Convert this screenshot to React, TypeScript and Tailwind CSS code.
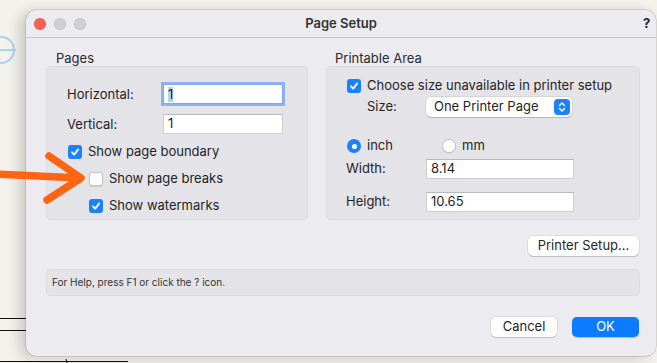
import React from 'react';

const ui = "font-['Inter','Helvetica',sans-serif]";

// macOS style check box
const CheckBox: React.FC<{ checked: boolean }> = ({ checked }) =>
  checked ? (
    <span className="flex h-[14px] w-[14px] shrink-0 items-center justify-center rounded-[3px] bg-[#1a82fb]">
      <svg width="10" height="10" viewBox="0 0 10 10">
        <path d="M2 5.3 L4.2 7.6 L8.2 2.4" fill="none" stroke="white" strokeWidth="1.8" strokeLinecap="round" strokeLinejoin="round" />
      </svg>
    </span>
  ) : (
    <span className="h-[14px] w-[14px] shrink-0 rounded-[3px] border border-[#c4c3c8] bg-white shadow-[0_0.5px_1px_rgba(0,0,0,0.12)]" />
  );

const Radio: React.FC<{ checked: boolean }> = ({ checked }) =>
  checked ? (
    <span className="flex h-[14px] w-[14px] shrink-0 items-center justify-center rounded-full bg-[#1a82fb]">
      <span className="h-[5px] w-[5px] rounded-full bg-white" />
    </span>
  ) : (
    <span className="h-[14px] w-[14px] shrink-0 rounded-full border border-[#c4c3c8] bg-white shadow-[0_0.5px_1px_rgba(0,0,0,0.12)]" />
  );

const TextField: React.FC<{ value: string; width: string; focused?: boolean }> = ({ value, width, focused }) => (
  <div
    className={`flex h-[20px] items-center border bg-white pl-[4px] text-[13px] text-[#1f1f1f] ${width} ${
      focused ? 'border-[#7fa9ec] shadow-[0_0_0_2px_#8db4f0]' : 'border-[#cfced2] border-t-[#b9b8bc]'
    }`}
  >
    {focused ? <span className="bg-[#b4d3fb] leading-[15px]">{value}</span> : value}
  </div>
);

const PushButton: React.FC<{ label: string; width: string; primary?: boolean }> = ({ label, width, primary }) => (
  <div
    className={`flex h-[20px] items-center justify-center rounded-[5px] text-[13px] ${width} ${
      primary
        ? 'bg-[#0c7cff] text-white shadow-[0_0.5px_1px_rgba(0,0,0,0.2)]'
        : 'bg-white text-[#1f1f1f] shadow-[0_0_0_0.5px_rgba(0,0,0,0.12),0_1px_1px_rgba(0,0,0,0.15)]'
    }`}
  >
    {label}
  </div>
);

export default function App() {
  return (
    <div className={`relative h-[363px] w-[657px] overflow-hidden bg-[#f3f2ec] ${ui}`}>
      {/* drawing behind the dialog */}
      <svg className="absolute left-0 top-0" width="657" height="363">
        <circle cx="1" cy="50" r="13" fill="none" stroke="#a9d3f0" strokeWidth="2" />
        <line x1="0" y1="50" x2="16" y2="50" stroke="#a9d3f0" strokeWidth="2" />
        <line x1="0" y1="318.5" x2="26" y2="318.5" stroke="#111" strokeWidth="1" />
        <line x1="0" y1="330.5" x2="26" y2="330.5" stroke="#111" strokeWidth="1" />
        <line x1="0" y1="361.5" x2="128" y2="361.5" stroke="#111" strokeWidth="1" />
        <line x1="66" y1="359" x2="67" y2="363" stroke="#111" strokeWidth="1" />
      </svg>

      {/* dialog window */}
      <div className="absolute left-[26px] top-[10px] flex h-[346px] w-[630px] flex-col rounded-[10px] bg-[#ecebf0] shadow-[-6px_2px_14px_rgba(0,0,0,0.18),0_0_0_0.5px_rgba(0,0,0,0.2)]">
        {/* title bar */}
        <div className="relative flex h-[28px] shrink-0 items-center border-b border-[#c9c8cd] px-[8px]">
          <div className="flex gap-[8px]">
            <span className="h-[12px] w-[12px] rounded-full bg-[#fe5f57] shadow-[inset_0_0_0_0.5px_rgba(0,0,0,0.15)]" />
            <span className="h-[12px] w-[12px] rounded-full bg-[#d0cfd4] shadow-[inset_0_0_0_0.5px_rgba(0,0,0,0.12)]" />
            <span className="h-[12px] w-[12px] rounded-full bg-[#d0cfd4] shadow-[inset_0_0_0_0.5px_rgba(0,0,0,0.12)]" />
          </div>
          <div className="absolute left-0 right-0 top-0 flex h-full items-center justify-center text-[13px] font-semibold text-[#333]">
            Page Setup
          </div>
          <div className="absolute left-[617px] top-0 flex h-full items-center text-[13px] font-bold text-[#222]">?</div>
        </div>

        <div className="flex flex-col pl-[20px] pr-[16px] pt-[12px]">
          <div className="flex gap-[18px]">
            {/* Pages */}
            <div className="flex w-[262px] flex-col">
              <div className="h-[16px] pl-[10px] text-[13px] leading-[16px] text-[#2a2a2a]">Pages</div>
              <div className="flex h-[154px] flex-col rounded-[5px] border border-[#dcdbe0] bg-[#e4e3e8] pt-[17px] text-[13px] text-[#1f1f1f]">
                <div className="flex h-[20px] items-center">
                  <span className="w-[116px] pl-[20px] pt-[2px]">Horizontal:</span>
                  <TextField value="1" width="w-[120px]" focused />
                </div>
                <div className="mt-[10px] flex h-[20px] items-center">
                  <span className="w-[116px] pl-[20px] pt-[2px]">Vertical:</span>
                  <TextField value="1" width="w-[120px]" />
                </div>
                <div className="mt-[4px] flex h-[28px] items-center gap-[6px] pl-[21px]">
                  <CheckBox checked />
                  <span>Show page boundary</span>
                </div>
                <div className="flex h-[28px] items-center gap-[6px] pl-[42px]">
                  <CheckBox checked={false} />
                  <span>Show page breaks</span>
                </div>
                <div className="flex h-[28px] items-center gap-[6px] pl-[42px]">
                  <CheckBox checked />
                  <span>Show watermarks</span>
                </div>
              </div>
            </div>

            {/* Printable Area */}
            <div className="flex w-[314px] flex-col">
              <div className="h-[16px] pl-[9px] text-[13px] leading-[16px] text-[#2a2a2a]">Printable Area</div>
              <div className="flex h-[154px] flex-col rounded-[5px] border border-[#dcdbe0] bg-[#e4e3e8] pt-[9px] text-[13px] text-[#1f1f1f]">
                <div className="flex h-[20px] items-center gap-[6px] pl-[20px]">
                  <CheckBox checked />
                  <span>Choose size unavailable in printer setup</span>
                </div>
                <div className="mt-[1px] flex h-[20px] items-center pl-[40px]">
                  <span className="w-[59px]">Size:</span>
                  <div className="flex h-[20px] w-[146px] items-center justify-between rounded-[5px] bg-white pl-[8px] pr-[2px] shadow-[0_0_0_0.5px_rgba(0,0,0,0.12),0_1px_1px_rgba(0,0,0,0.15)]">
                    <span>One Printer Page</span>
                    <span className="flex h-[16px] w-[16px] items-center justify-center rounded-[4px] bg-[#1a82fb]">
                      <svg width="8" height="12" viewBox="0 0 8 12">
                        <path d="M1.5 4.5 L4 2 L6.5 4.5 M1.5 7.5 L4 10 L6.5 7.5" fill="none" stroke="white" strokeWidth="1.4" strokeLinecap="round" strokeLinejoin="round" />
                      </svg>
                    </span>
                  </div>
                </div>
                <div className="mt-[19px] flex h-[20px] items-center pl-[20px]">
                  <Radio checked />
                  <span className="ml-[6px] w-[75px]">inch</span>
                  <Radio checked={false} />
                  <span className="ml-[6px]">mm</span>
                </div>
                <div className="mt-[3px] flex h-[20px] items-center pl-[19px]">
                  <span className="w-[80px]">Width:</span>
                  <TextField value="8.14" width="w-[148px]" />
                </div>
                <div className="mt-[13px] flex h-[20px] items-center pl-[19px]">
                  <span className="w-[80px]">Height:</span>
                  <TextField value="10.65" width="w-[148px]" />
                </div>
              </div>
            </div>
          </div>

          <div className="mt-[16px] flex justify-end pr-[1px]">
            <PushButton label="Printer Setup..." width="w-[111px]" />
          </div>

          <div className="mt-[13px] flex h-[27px] items-center rounded-[5px] border border-[#dcdbe0] bg-[#e4e3e8] pl-[5px] text-[10px] text-[#333]">
            For Help, press F1 or click the ? icon.
          </div>

          <div className="mt-[21px] flex justify-end gap-[15px] pr-[1px]">
            <PushButton label="Cancel" width="w-[66px]" />
            <PushButton label="OK" width="w-[67px]" primary />
          </div>
        </div>
      </div>

      {/* annotation arrow */}
      <svg className="pointer-events-none absolute left-0 top-0" width="120" height="230">
        <path d="M-4 174 L80 178 M49 156 L81 178 L47 200" fill="none" stroke="#ff6412" strokeWidth="7.5" strokeLinecap="round" strokeLinejoin="round" />
      </svg>
    </div>
  );
}
